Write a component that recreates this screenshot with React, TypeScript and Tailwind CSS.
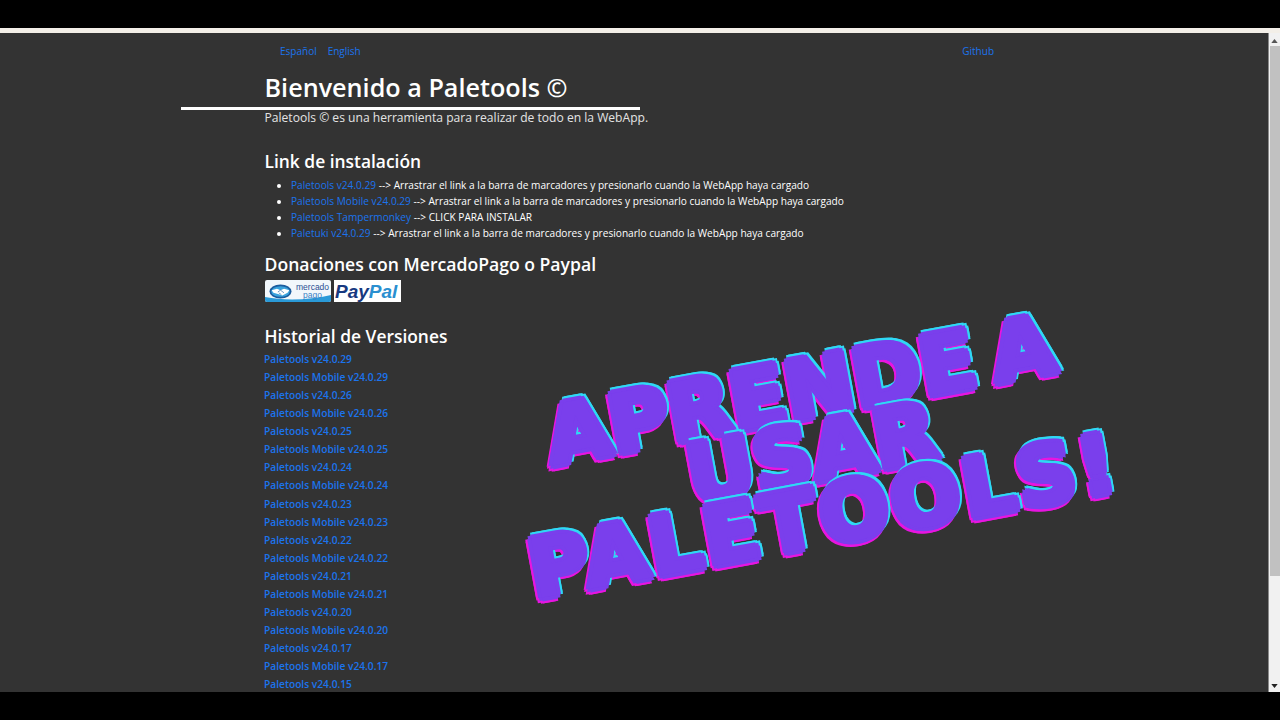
const versions = ["29","29m","26","26m","25","25m","24","24m","23","23m","22","22m","21","21m","20","20m","17","17m","15"];

function MercadoPago() {
  return (
    <span className="relative flex h-[22px] w-[66px] items-center overflow-hidden rounded-[2px] bg-[#f2f7fb]">
      <svg viewBox="0 0 66 22" className="absolute inset-0 h-[22px] w-[66px]">
        <path d="M0 17 C20 21 45 20 66 15 V22 H0 Z" fill="#2a9ad8" />
      </svg>
      <svg viewBox="0 0 26 17" className="relative ml-[3px] h-[15px] w-[25px]">
        <ellipse cx="13" cy="8.5" rx="12.5" ry="8" fill="#1b5c9e" />
        <ellipse cx="13" cy="8.5" rx="10.5" ry="6" fill="#3aa2dc" />
        <path d="M3 7 L9 5.5 L13 7 L17 5.5 L23 7 L21 10 L15 13 L12 12 L5 10 Z" fill="#ffffff" />
        <path d="M10 9 L13 7 L17 10 M11 10 L14 12" stroke="#1b5c9e" strokeWidth="0.7" fill="none" />
      </svg>
      <span className="relative ml-[3px] flex flex-col items-center font-['Liberation_Sans',sans-serif] text-[8.5px] leading-[8px]">
        <span className="text-[#2b4f94]">mercado</span>
        <span className="text-[#3a7fc4]">pago</span>
      </span>
    </span>
  );
}

function PayPal() {
  return (
    <span className="relative flex h-[22px] w-[67px] items-center bg-white pl-[1px] font-['Liberation_Sans',sans-serif] text-[19px] font-bold italic leading-none">
      <span className="text-[#17397f]">Pay</span>
      <span className="text-[#2a8fd0]">Pal</span>
    </span>
  );
}

export default function App() {
  return (
    <div className="flex h-[720px] w-[1280px] flex-col overflow-hidden bg-black font-['Open_Sans','Noto_Sans',sans-serif]">
      <div className="h-[28px] shrink-0 bg-black" />
      <div className="h-[5px] shrink-0 bg-[#f3efe8]" />
      <div className="relative flex h-[659px] shrink-0">
        <main className="h-full min-w-0 flex-1 overflow-hidden bg-[#333333] text-white">
          <nav className="ml-[280px] flex w-[714px] pt-[10px] text-[10px] leading-[16px] text-[#1b74ee]">
            <span>Español</span>
            <span className="ml-[11px]">English</span>
            <span className="ml-auto">Github</span>
          </nav>
          <h1 className="ml-[264.5px] mt-[12px] text-[25.2px] font-semibold leading-[32px]">Bienvenido a Paletools ©</h1>
          <div className="ml-[181px] mt-[4px] h-[3px] w-[459px] bg-white" />
          <p className="ml-[264.5px] mt-[-1px] text-[12.1px] leading-[18px] text-[#e4e4e4]">Paletools © es una herramienta para realizar de todo en la WebApp.</p>
          <h2 className="ml-[264.5px] mt-[22px] text-[17.4px] font-semibold leading-[24px]">Link de instalación</h2>
          <ul className="ml-[291px] mt-[4px] list-disc text-[10.14px] leading-[16px]">
            <li><span className="text-[#1b74ee]">Paletools v24.0.29</span> --&gt; Arrastrar el link a la barra de marcadores y presionarlo cuando la WebApp haya cargado</li>
            <li><span className="text-[#1b74ee]">Paletools Mobile v24.0.29</span> --&gt; Arrastrar el link a la barra de marcadores y presionarlo cuando la WebApp haya cargado</li>
            <li><span className="text-[#1b74ee]">Paletools Tampermonkey</span> --&gt; CLICK PARA INSTALAR</li>
            <li><span className="text-[#1b74ee]">Paletuki v24.0.29</span> --&gt; Arrastrar el link a la barra de marcadores y presionarlo cuando la WebApp haya cargado</li>
          </ul>
          <h2 className="ml-[264.5px] mt-[11px] text-[17.6px] font-semibold leading-[24px]">Donaciones con MercadoPago o Paypal</h2>
          <div className="ml-[265px] mt-[4px] flex items-center gap-[3px]">
            <MercadoPago />
            <PayPal />
          </div>
          <h2 className="ml-[264.5px] mt-[22px] text-[17.4px] font-semibold leading-[24px]">Historial de Versiones</h2>
          <ul className="ml-[264px] mt-[2px] text-[10.2px] font-semibold leading-[18.07px] text-[#1b74ee]">
            {versions.map((v) => (
              <li key={v}>{v.endsWith("m") ? `Paletools Mobile v24.0.${v.slice(0, -1)}` : `Paletools v24.0.${v}`}</li>
            ))}
          </ul>
        </main>
        <aside className="flex h-full w-[12px] shrink-0 flex-col items-center border-l border-[#8a8a8a] bg-[#f1f1f1]">
          <svg viewBox="0 0 8 5" className="mt-[6px] h-[4px] w-[7px] shrink-0"><path d="M4 0 L8 5 H0 Z" fill="#555" /></svg>
          <div className="mt-[3px] h-[530px] w-[10px] shrink-0 bg-[#c1c1c1]" />
          <svg viewBox="0 0 8 5" className="mb-[4px] mt-auto h-[4px] w-[7px] shrink-0"><path d="M4 5 L8 0 H0 Z" fill="#222" /></svg>
        </aside>
        <div className="pointer-events-none absolute left-[512px] top-[325px] w-[600px] origin-center rotate-[-10.5deg] text-center font-['DejaVu_Sans',sans-serif] text-[82px] font-bold uppercase leading-[64px] [word-spacing:-12px] text-[#7a3fec] [text-shadow:4px_0_0_#7a3fec,-4px_0_0_#7a3fec,0_4px_0_#7a3fec,0_-4px_0_#7a3fec,3px_3px_0_#7a3fec,3px_-3px_0_#7a3fec,-3px_3px_0_#7a3fec,-3px_-3px_0_#7a3fec,6px_-2px_0_#2fd8f5,2px_-6px_0_#2fd8f5,5px_-5px_0_#2fd8f5,6px_0_0_#2fd8f5,0_-6px_0_#2fd8f5,-6px_2px_0_#e815e0,-2px_6px_0_#e815e0,-5px_5px_0_#e815e0,-6px_0_0_#e815e0,0_6px_0_#e815e0]">
          <div>Aprende a</div>
          <div>Usar</div>
          <div className="tracking-[3px]">Paletools!</div>
        </div>
      </div>
      <div className="flex-1 bg-black" />
    </div>
  );
}
